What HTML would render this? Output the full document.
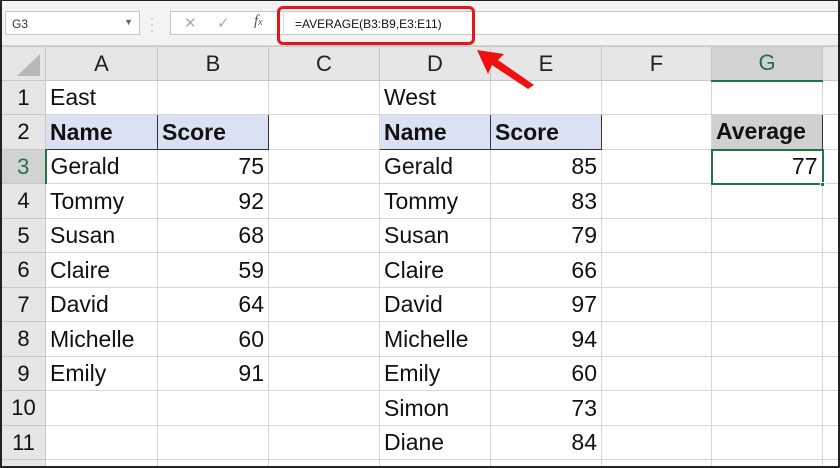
<!DOCTYPE html>
<html><head><meta charset="utf-8"><style>
*{box-sizing:border-box;margin:0;padding:0}
html,body{width:840px;height:468px;overflow:hidden}
body{background:#fff;position:relative;font-family:"Liberation Sans",sans-serif}
.frame{position:absolute;left:0;top:0;width:840px;height:468px;border:2px solid #222;border-top:1px solid #222;pointer-events:none;z-index:9}
.topbar{position:absolute;left:0;top:0;width:840px;height:46px;background:#f3f3f3;border-bottom:1px solid #d4d4d4}
.nb{position:absolute;left:5px;top:11px;width:135px;height:24px;background:#fff;border:1px solid #c6c6c6;font-size:12px;color:#333;padding:5px 6px}
.fb{position:absolute;left:170px;top:11px;width:670px;height:24px;background:#fff;border:1px solid #c6c6c6}
.ft{position:absolute;left:295px;top:17px;font-size:12px;color:#111}
.red{position:absolute;left:277px;top:6px;width:198px;height:39px;border:3px solid #e8141b;border-radius:6px;z-index:5}
table{position:absolute;left:1px;top:46px;border-collapse:collapse;table-layout:fixed}
td{border:1px solid #d6d6d6;font-size:23px;color:#111;padding:0 4px;white-space:nowrap;overflow:hidden}
tr.h td{height:34px;background:#e6e6e6;text-align:center;font-size:22px;color:#222;border-color:#c8c8c8}
td.rh{background:#e6e6e6;text-align:center;font-size:22px;padding:0;border-color:#c8c8c8}
td.n{text-align:right}
td.hd{background:#d9e1f2;font-weight:bold;border:1px solid #333}
td.av{background:#d0d0d0;font-weight:bold;border:1px solid #333}
td.sel{border:2px solid #217346}
</style></head><body>
<div class="topbar"></div>
<div class="nb">G3<span style="position:absolute;right:6px;top:5px;font-size:9px;color:#666">▼</span></div>
<div style="position:absolute;left:150px;top:15px;color:#999;font-size:12px;line-height:6px">·<br>·<br>·</div>
<div class="fb"></div>
<div style="position:absolute;left:283px;top:11px;width:1px;height:24px;background:#ddd"></div>
<div style="position:absolute;left:184px;top:14px;color:#aaa;font-size:15px">✕</div>
<div style="position:absolute;left:217px;top:14px;color:#aaa;font-size:15px">✓</div>
<div style="position:absolute;left:254px;top:13px;color:#555;font-size:15px;font-style:italic;font-family:'Liberation Serif',serif">f<span style="font-size:10px">x</span></div>
<div class="ft">=AVERAGE(B3:B9,E3:E11)</div>
<div class="red"></div>
<svg style="position:absolute;left:0;top:0;z-index:6" width="840" height="100"><polygon points="477,50 504,54 498,60 534,85 528,89 492,65 488,74" fill="#f01010"/></svg>
<svg style="position:absolute;left:14px;top:52px;z-index:2" width="28" height="26"><polygon points="26,2 26,24 3,24" fill="#b8b8b8"/></svg>
<table>
<colgroup><col style="width:44px"><col style="width:112px"><col style="width:111px"><col style="width:111px"><col style="width:111px"><col style="width:111px"><col style="width:110px"><col style="width:111px"><col style="width:16px"></colgroup>
<tr class="h"><td></td><td>A</td><td>B</td><td>C</td><td>D</td><td>E</td><td>F</td><td style="background:#d2d2d2;color:#217346;border-bottom:2px solid #217346">G</td><td></td></tr>
<tr style="height:34px"><td class="rh">1</td><td>East</td><td></td><td></td><td>West</td><td></td><td></td><td></td><td></td></tr>
<tr style="height:35px"><td class="rh">2</td><td class="hd">Name</td><td class="hd">Score</td><td></td><td class="hd">Name</td><td class="hd">Score</td><td></td><td class="av">Average</td><td></td></tr>
<tr style="height:34px"><td class="rh" style="background:#d2d2d2;color:#217346;border-right:2px solid #217346">3</td><td>Gerald</td><td class="n">75</td><td></td><td>Gerald</td><td class="n">85</td><td></td><td class="n sel">77</td><td></td></tr>
<tr style="height:35px"><td class="rh">4</td><td>Tommy</td><td class="n">92</td><td></td><td>Tommy</td><td class="n">83</td><td></td><td></td><td></td></tr>
<tr style="height:34px"><td class="rh">5</td><td>Susan</td><td class="n">68</td><td></td><td>Susan</td><td class="n">79</td><td></td><td></td><td></td></tr>
<tr style="height:35px"><td class="rh">6</td><td>Claire</td><td class="n">59</td><td></td><td>Claire</td><td class="n">66</td><td></td><td></td><td></td></tr>
<tr style="height:34px"><td class="rh">7</td><td>David</td><td class="n">64</td><td></td><td>David</td><td class="n">97</td><td></td><td></td><td></td></tr>
<tr style="height:35px"><td class="rh">8</td><td>Michelle</td><td class="n">60</td><td></td><td>Michelle</td><td class="n">94</td><td></td><td></td><td></td></tr>
<tr style="height:34px"><td class="rh">9</td><td>Emily</td><td class="n">91</td><td></td><td>Emily</td><td class="n">60</td><td></td><td></td><td></td></tr>
<tr style="height:35px"><td class="rh">10</td><td></td><td></td><td></td><td>Simon</td><td class="n">73</td><td></td><td></td><td></td></tr>
<tr style="height:34px"><td class="rh">11</td><td></td><td></td><td></td><td>Diane</td><td class="n">84</td><td></td><td></td><td></td></tr>
<tr style="height:8px"><td class="rh"></td><td></td><td></td><td></td><td></td><td></td><td></td><td></td><td></td></tr>
</table>
<div style="position:absolute;left:820px;top:182px;width:5px;height:5px;background:#217346;border:1px solid #fff;z-index:3"></div>
<div class="frame"></div>
</body></html>
